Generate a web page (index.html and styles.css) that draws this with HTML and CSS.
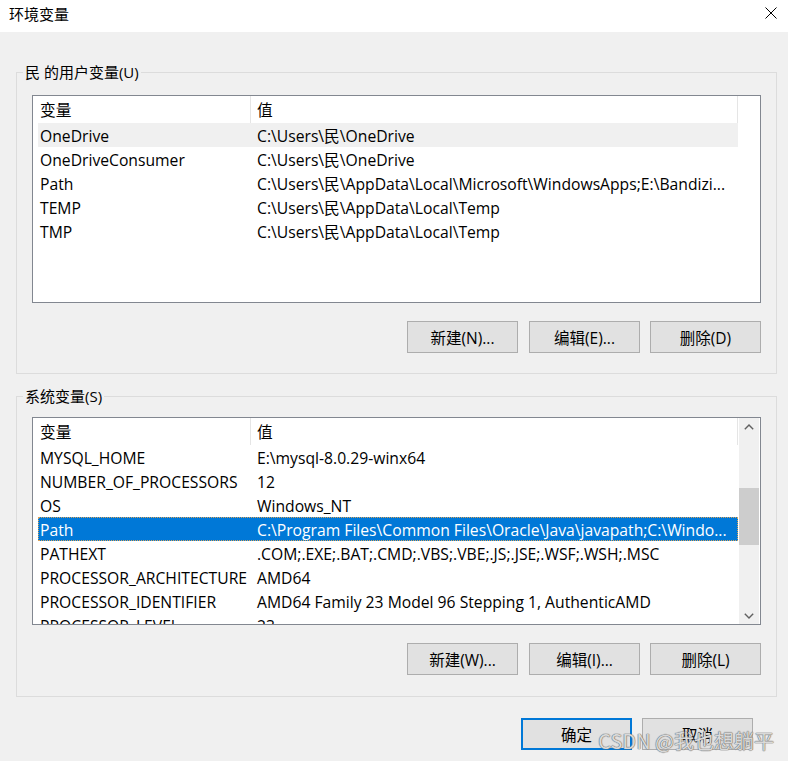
FILE: index.html
```html
<!DOCTYPE html>
<html>

<head>
  <title>环境变量</title>
  <link rel="stylesheet" href="styles.css">
</head>

<body>
  <div class="window">
    <div class="titlebar">
      <span class="title">环境变量</span>
      <svg class="close" width="12" height="12" viewBox="0 0 12 12">
        <path d="M0.5 0.5 L11.5 11.5 M11.5 0.5 L0.5 11.5" stroke="#000" stroke-width="1" fill="none" />
      </svg>
    </div>

    <div class="content">
      <fieldset class="group group-user">
        <legend>民 的用户变量(U)</legend>
        <div class="list">
          <div class="table">
            <div class="header">
              <div class="hcell name">变量</div>
              <div class="hcell value">值</div>
            </div>
            <div class="row hot">
              <div class="cell name">OneDrive</div>
              <div class="cell value">C:\Users\民\OneDrive</div>
            </div>
            <div class="row">
              <div class="cell name">OneDriveConsumer</div>
              <div class="cell value">C:\Users\民\OneDrive</div>
            </div>
            <div class="row">
              <div class="cell name">Path</div>
              <div class="cell value">C:\Users\民\AppData\Local\Microsoft\WindowsApps;E:\Bandizi...</div>
            </div>
            <div class="row">
              <div class="cell name">TEMP</div>
              <div class="cell value">C:\Users\民\AppData\Local\Temp</div>
            </div>
            <div class="row">
              <div class="cell name">TMP</div>
              <div class="cell value">C:\Users\民\AppData\Local\Temp</div>
            </div>
          </div>
        </div>
        <div class="buttons">
          <button class="btn">新建(N)...</button>
          <button class="btn">编辑(E)...</button>
          <button class="btn">删除(D)</button>
        </div>
      </fieldset>

      <fieldset class="group group-system">
        <legend>系统变量(S)</legend>
        <div class="list">
          <div class="table">
            <div class="header">
              <div class="hcell name">变量</div>
              <div class="hcell value">值</div>
            </div>
            <div class="row">
              <div class="cell name">MYSQL_HOME</div>
              <div class="cell value">E:\mysql-8.0.29-winx64</div>
            </div>
            <div class="row">
              <div class="cell name">NUMBER_OF_PROCESSORS</div>
              <div class="cell value">12</div>
            </div>
            <div class="row">
              <div class="cell name">OS</div>
              <div class="cell value">Windows_NT</div>
            </div>
            <div class="row selected">
              <div class="cell name">Path</div>
              <div class="cell value">C:\Program Files\Common Files\Oracle\Java\javapath;C:\Windo...</div>
            </div>
            <div class="row">
              <div class="cell name">PATHEXT</div>
              <div class="cell value">.COM;.EXE;.BAT;.CMD;.VBS;.VBE;.JS;.JSE;.WSF;.WSH;.MSC</div>
            </div>
            <div class="row">
              <div class="cell name">PROCESSOR_ARCHITECTURE</div>
              <div class="cell value">AMD64</div>
            </div>
            <div class="row">
              <div class="cell name">PROCESSOR_IDENTIFIER</div>
              <div class="cell value">AMD64 Family 23 Model 96 Stepping 1, AuthenticAMD</div>
            </div>
            <div class="row">
              <div class="cell name">PROCESSOR_LEVEL</div>
              <div class="cell value">23</div>
            </div>
          </div>
          <div class="scrollbar">
            <div class="arrow">
              <svg width="10" height="6" viewBox="0 0 10 6">
                <path d="M0.8 5.2 L5 1 L9.2 5.2" stroke="#606060" stroke-width="1.4" fill="none" />
              </svg>
            </div>
            <div class="track-top"></div>
            <div class="thumb"></div>
            <div class="track-rest"></div>
            <div class="arrow">
              <svg width="10" height="6" viewBox="0 0 10 6">
                <path d="M0.8 0.8 L5 5 L9.2 0.8" stroke="#606060" stroke-width="1.4" fill="none" />
              </svg>
            </div>
          </div>
        </div>
        <div class="buttons">
          <button class="btn">新建(W)...</button>
          <button class="btn">编辑(I)...</button>
          <button class="btn">删除(L)</button>
        </div>
      </fieldset>

      <div class="footer">
        <button class="btn btn-default">确定</button>
        <button class="btn">取消</button>
      </div>
    </div>

    <div class="watermark">CSDN @我也想躺平</div>
  </div>
</body>

</html>
```

FILE: styles.css
```css
    body {
      margin: 0;
      font-family: "Open Sans", "Noto Sans CJK SC", sans-serif;
      font-size: 15px;
      color: #000;
      background-color: #f0f0f0;
    }

    .window {
      position: relative;
      width: 788px;
      height: 761px;
      background-color: #f0f0f0;
      overflow: hidden;
    }

    .titlebar {
      height: 32px;
      background-color: #fff;
      display: flex;
      align-items: center;
      justify-content: space-between;
      padding: 0 11px 0 9px;
    }

    .title {
      font-family: "Noto Sans CJK SC", sans-serif;
      font-size: 15px;
      line-height: 20px;
      margin-top: -5px;
    }

    .close {
      margin-top: -6px;
    }

    .content {
      padding: 30px 11px 0 16px;
    }

    .group {
      margin: 0;
      padding: 0 15px 20px;
      border: 1px solid #dcdcdc;
      min-inline-size: 0;
    }

    .group legend {
      margin-left: -9px;
      padding: 0 2px;
      line-height: 20px;
      font-size: 15px;
    }

    .group-user .list {
      margin-top: 13px;
    }

    .group-system {
      margin-top: 12px;
      padding-bottom: 21px;
    }

    .group-system .list {
      margin-top: 11px;
    }

    .list {
      height: 206px;
      border: 1px solid #828790;
      background-color: #fff;
      display: flex;
      overflow: hidden;
      font-size: 15.7px;
    }

    .table {
      width: 705px;
      flex: none;
    }

    .header {
      display: flex;
      height: 27px;
    }

    .hcell {
      line-height: 29px;
      height: 27px;
      overflow: hidden;
      border-right: 1px solid #e5e5e5;
      white-space: nowrap;
    }

    .hcell.name {
      width: 210px;
      padding-left: 7px;
    }

    .hcell.value {
      width: 480px;
      padding-left: 6px;
    }

    .row {
      display: flex;
      height: 24px;
      margin-left: 5px;
      width: 700px;
      box-sizing: border-box;
    }

    .row.hot {
      background-color: #f0f0f0;
    }

    .row.selected {
      background-color: #0078d7;
      color: #fff;
      outline: 1px dotted #d9a35a;
      outline-offset: -1px;
    }

    .cell {
      height: 24px;
      line-height: 26px;
      white-space: nowrap;
      overflow: hidden;
      text-overflow: ellipsis;
    }

    .cell.name {
      width: 211px;
      flex: none;
      padding-left: 2px;
    }

    .cell.value {
      flex: 1;
      padding-left: 6px;
    }

    .scrollbar {
      width: 20px;
      margin-left: 1px;
      background-color: #f0f0f0;
      display: flex;
      flex-direction: column;
    }

    .arrow {
      height: 17px;
      display: flex;
      align-items: center;
      justify-content: center;
    }

    .track-top {
      height: 53px;
    }

    .thumb {
      height: 57px;
      background-color: #cdcdcd;
    }

    .track-rest {
      flex: 1;
    }

    .buttons {
      display: flex;
      justify-content: flex-end;
      gap: 10px;
      margin-top: 18px;
    }

    .btn {
      width: 111px;
      height: 32px;
      padding: 0;
      font-family: "Open Sans", "Noto Sans CJK SC", sans-serif;
      font-size: 15.5px;
      color: #000;
      background-color: #e1e1e1;
      border: 1px solid #adadad;
      border-radius: 0;
    }

    .buttons .btn:first-child {
      margin-right: 1px;
    }

    .footer {
      display: flex;
      justify-content: flex-end;
      gap: 10px;
      margin-top: 21px;
      padding-right: 24px;
    }

    .btn-default {
      border: 2px solid #0078d7;
    }

    .watermark {
      position: absolute;
      right: 14px;
      bottom: 6px;
      font-family: "Noto Sans CJK SC", sans-serif;
      font-size: 20px;
      line-height: 28px;
      color: rgba(250, 250, 250, 0.8);
      text-shadow: 0 0 1px #666, 0 0 1px #666, 0 0 1px #888;
    }
```
